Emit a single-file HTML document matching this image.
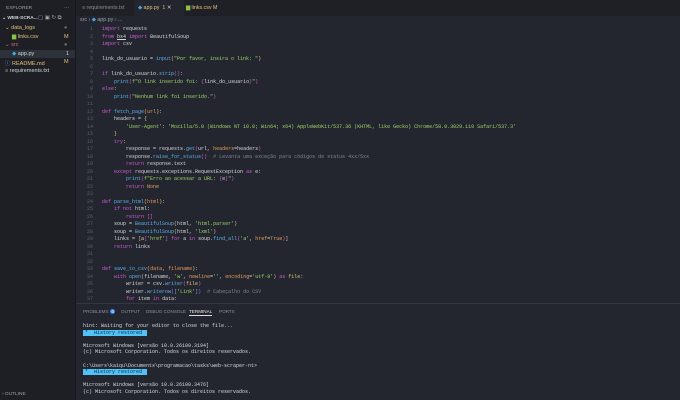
<!DOCTYPE html>
<html><head><meta charset="utf-8"><style>
*{margin:0;padding:0;box-sizing:border-box}
body{width:680px;height:400px;overflow:hidden;background:#23262e;font-family:"Liberation Sans",sans-serif;color:#c8ccd4;position:relative}
.side{position:absolute;left:0;top:0;width:76px;height:400px;background:#1d1f25;border-right:1px solid #15171b}
.side div{position:absolute;font-size:5.5px;white-space:nowrap;color:#d0d3d8}
.tabs{position:absolute;left:76px;top:0;right:0;height:16px;background:#1e2025}
.tab{position:absolute;top:0;height:16px;font-size:5.3px;line-height:16px;white-space:nowrap;color:#8a8f98}
.crumb{position:absolute;left:80px;top:16px;font-size:5.3px;color:#9aa0a8;line-height:8px}
.code{position:absolute;left:76px;top:24px;right:0;height:280px;overflow:hidden;font-family:"Liberation Mono",monospace;font-size:5px}
.ln{position:absolute;left:0;width:17px;text-align:right;color:#5a5f6a}
.l{position:absolute;left:26px;white-space:pre;color:#d6d9de}
.k{color:#d05bd8}.s{color:#9fd36a}.f{color:#5cb0f0}.p{color:#f09a5a}.c{color:#7f848e}.b{color:#e5c07b}.n{color:#e8a05c}
.panel{position:absolute;left:76px;top:303px;right:0;bottom:0;background:#23262e;border-top:1px solid #333742}
.pt{position:absolute;top:5px;font-size:4.6px;color:#8a8f98;white-space:nowrap}
.term{position:absolute;left:7px;top:19px;font-family:"Liberation Mono",monospace;font-size:5px;color:#d6d9de;white-space:pre;line-height:6.6px}
.hr{background:#4fc3f7;color:#123;padding:0 2px}
</style></head><body>
<div class="side">
<div style="left:6px;top:6px;color:#9aa0a8;font-size:4.8px">EXPLORER</div>
<div style="left:64px;top:5px;color:#9aa0a8">···</div>
<div style="left:2px;top:16px;font-weight:bold;font-size:4.8px">⌄ WEB-SCRA...</div>
<div style="left:38px;top:15px;color:#aaa">▢ ▣ ↻ ⧉</div>
<div style="left:5px;top:25px;color:#e5c07b">⌄ data_logs</div><div style="left:64px;top:25px;color:#777">●</div>
<div style="left:12px;top:34px;color:#e5c07b"><span style="color:#8bc34a">▆</span> links.csv</div><div style="left:64px;top:34px;color:#e5c07b">M</div>
<div style="left:5px;top:42px;color:#e06c75">⌄ src</div><div style="left:64px;top:42px;color:#777">●</div>
<div style="left:0;top:50px;width:75px;height:8px;background:#2c313a"></div>
<div style="left:12px;top:51px;color:#d0d4da"><span style="color:#4fa3e0">◆</span> app.py</div><div style="left:66px;top:51px">1</div>
<div style="left:5px;top:59px;color:#e5c07b"><span style="color:#4fa3e0">ⓘ</span> README.md</div><div style="left:64px;top:59px;color:#e5c07b">M</div>
<div style="left:5px;top:68px"><span style="color:#9aa">≡</span> requirements.txt</div>
<div style="left:2px;top:392px;color:#9aa0a8;font-size:4.8px">› OUTLINE</div>
</div>
<div class="tabs">
<div class="tab" style="left:6px">≡ requirements.txt</div>
<div class="tab" style="left:58px;width:50px;background:#23262e;padding-left:4px;color:#e5c07b"><span style="color:#4fa3e0">◆</span> app.py &nbsp;<span style="color:#e5c07b">1</span> <span style="color:#ccc">✕</span></div>
<div class="tab" style="left:110px;color:#e5c07b"><span style="color:#8bc34a">▆</span> links.csv M</div>
</div>
<div class="crumb">src › <span style="color:#4fa3e0">◆</span> app.py › ...</div>
<div class="code">
<div class="ln" style="top:2px;line-height:7.5px">1<br>2<br>3<br>4<br>5<br>6<br>7<br>8<br>9<br>10<br>11<br>12<br>13<br>14<br>15<br>16<br>17<br>18<br>19<br>20<br>21<br>22<br>23<br>24<br>25<br>26<br>27<br>28<br>29<br>30<br>31<br>32<br>33<br>34<br>35<br>36<br>37<br>38</div>
<div class="l" style="top:2px;line-height:7.5px"><span class="k">import</span> requests
<span class="k">from</span> <u>bs4</u> <span class="k">import</span> BeautifulSoup
<span class="k">import</span> csv

link_do_usuario = <span class="f">input</span><span class="b">(</span><span class="s">"Por favor, insira o link: "</span><span class="b">)</span>

<span class="k">if</span> link_do_usuario.<span class="f">strip</span><span class="k">()</span>:
    <span class="f">print</span><span class="k">(</span><span class="s">f"O link inserido foi: </span><span class="k">{</span>link_do_usuario<span class="k">}</span><span class="s">"</span><span class="k">)</span>
<span class="k">else</span>:
    <span class="f">print</span><span class="k">(</span><span class="s">"Nenhum link foi inserido."</span><span class="k">)</span>

<span class="k">def</span> <span class="f">fetch_page</span><span class="b">(</span><span class="p">url</span><span class="b">)</span>:
    headers = <span class="b">{</span>
        <span class="s">'User-Agent'</span>: <span class="s">'Mozilla/5.0 (Windows NT 10.0; Win64; x64) AppleWebKit/537.36 (KHTML, like Gecko) Chrome/58.0.3029.110 Safari/537.3'</span>
    <span class="b">}</span>
    <span class="k">try</span>:
        response = requests.<span class="f">get</span><span class="k">(</span>url, <span class="n">headers</span>=headers<span class="k">)</span>
        response.<span class="f">raise_for_status</span><span class="k">()</span>  <span class="c"># Levanta uma exceção para códigos de status 4xx/5xx</span>
        <span class="k">return</span> response.text
    <span class="k">except</span> requests.exceptions.RequestException <span class="k">as</span> e:
        <span class="f">print</span><span class="k">(</span><span class="s">f"Erro ao acessar a URL: </span><span class="k">{</span>e<span class="k">}</span><span class="s">"</span><span class="k">)</span>
        <span class="k">return</span> <span class="n">None</span>

<span class="k">def</span> <span class="f">parse_html</span><span class="b">(</span><span class="p">html</span><span class="b">)</span>:
    <span class="k">if not</span> html:
        <span class="k">return</span> <span class="k">[]</span>
    soup = <span class="f">BeautifulSoup</span><span class="b">(</span>html, <span class="s">'html.parser'</span><span class="b">)</span>
    soup = <span class="f">BeautifulSoup</span><span class="b">(</span>html, <span class="s">'lxml'</span><span class="b">)</span>
    links = <span class="b">[</span>a<span class="k">[</span><span class="s">'href'</span><span class="k">]</span> <span class="k">for</span> a <span class="k">in</span> soup.<span class="f">find_all</span><span class="k">(</span><span class="s">'a'</span>, <span class="n">href</span>=<span class="n">True</span><span class="k">)</span><span class="b">]</span>
    <span class="k">return</span> links


<span class="k">def</span> <span class="f">save_to_csv</span><span class="b">(</span><span class="p">data</span>, <span class="p">filename</span><span class="b">)</span>:
    <span class="k">with</span> <span class="f">open</span><span class="b">(</span>filename, <span class="s">'w'</span>, <span class="n">newline</span>=<span class="s">''</span>, <span class="n">encoding</span>=<span class="s">'utf-8'</span><span class="b">)</span> <span class="k">as</span> <span class="b">file</span>:
        writer = csv.<span class="f">writer</span><span class="k">(</span><span class="b">file</span><span class="k">)</span>
        writer.<span class="f">writerow</span><span class="k">(</span><span class="f">[</span><span class="s">'Link'</span><span class="f">]</span><span class="k">)</span>  <span class="c"># Cabeçalho do CSV</span>
        <span class="k">for</span> item <span class="k">in</span> data:
            writer.<span class="f">writerow</span><span class="k">([</span>item<span class="k">])</span></div>
</div>
<div class="panel">
<div class="pt" style="left:7px">PROBLEMS <span style="background:#3b82f6;color:#fff;border-radius:3px;padding:0 1.5px">6</span></div>
<div class="pt" style="left:45px">OUTPUT</div>
<div class="pt" style="left:70px">DEBUG CONSOLE</div>
<div class="pt" style="left:113px;color:#e6e6e6;border-bottom:1px solid #ddd;padding-bottom:1px">TERMINAL</div>
<div class="pt" style="left:143px">PORTS</div>
<div class="term">hint: Waiting for your editor to close the file...
<span class="hr">*  History restored </span>

Microsoft Windows [versão 10.0.26100.3194]
(c) Microsoft Corporation. Todos os direitos reservados.

C:\Users\kaiqu\Documents\programacao\tasks\web-scraper-nt>
<span class="hr">*  History restored </span>

Microsoft Windows [versão 10.0.26100.3476]
(c) Microsoft Corporation. Todos os direitos reservados.</div>
</div>
</body></html>
